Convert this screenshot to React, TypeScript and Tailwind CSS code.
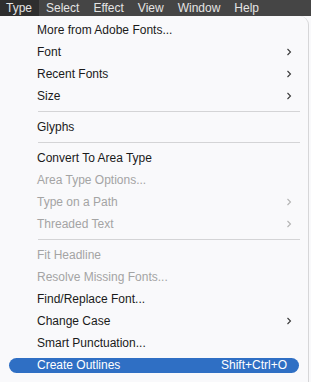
import { ReactNode } from "react";

type Item =
  | { kind: "sep" }
  | {
      kind: "item";
      label: string;
      disabled?: boolean;
      submenu?: boolean;
      shortcut?: string;
      active?: boolean;
    };

const menuBar = ["Type", "Select", "Effect", "View", "Window", "Help"];

const items: Item[] = [
  { kind: "item", label: "More from Adobe Fonts..." },
  { kind: "item", label: "Font", submenu: true },
  { kind: "item", label: "Recent Fonts", submenu: true },
  { kind: "item", label: "Size", submenu: true },
  { kind: "sep" },
  { kind: "item", label: "Glyphs" },
  { kind: "sep" },
  { kind: "item", label: "Convert To Area Type" },
  { kind: "item", label: "Area Type Options...", disabled: true },
  { kind: "item", label: "Type on a Path", disabled: true, submenu: true },
  { kind: "item", label: "Threaded Text", disabled: true, submenu: true },
  { kind: "sep" },
  { kind: "item", label: "Fit Headline", disabled: true },
  { kind: "item", label: "Resolve Missing Fonts...", disabled: true },
  { kind: "item", label: "Find/Replace Font..." },
  { kind: "item", label: "Change Case", submenu: true },
  { kind: "item", label: "Smart Punctuation..." },
  { kind: "item", label: "Create Outlines", shortcut: "Shift+Ctrl+O", active: true },
];

function Chevron({ disabled }: { disabled?: boolean }) {
  return (
    <svg width="6" height="8" viewBox="0 0 6 8" className={disabled ? "text-[#b4b4b4]" : "text-[#3a3a3a]"}>
      <path d="M1.5 1 L4.5 4 L1.5 7" fill="none" stroke="currentColor" strokeWidth="1.1" />
    </svg>
  );
}

function Row({ children, active }: { children: ReactNode; active?: boolean }) {
  return (
    <div className="flex h-[22px] items-center px-[9px]">
      <div
        className={
          active
            ? "flex h-[15px] w-full items-center rounded-full bg-[#2f6fc4] pl-[28px] pr-[12px] text-white"
            : "flex h-[15px] w-full items-center pl-[28px] pr-[7px]"
        }
      >
        {children}
      </div>
    </div>
  );
}

export default function App() {
  return (
    <div className="h-[382px] w-[311px] overflow-hidden bg-[#f9f9fb] font-['Liberation_Sans',Arial,sans-serif]">
      <div className="flex h-[16px] items-center bg-[#454545] text-[12px] leading-none text-[#e4e4e4]">
        {menuBar.map((m, i) => (
          <div
            key={m}
            className={
              i === 0
                ? "flex h-full items-center bg-[#2e2e2e] pl-[6px] pr-[7px]"
                : "flex h-full items-center px-[7px]"
            }
          >
            {m}
          </div>
        ))}
      </div>
      <div className="relative mr-[2px] h-[366px] rounded-tr-[9px] border-r border-[#d6d6d8] bg-[#f9f9fb] pt-[3px] text-[12px] text-[#1a1a1a]">
        {items.map((it, i) =>
          it.kind === "sep" ? (
            <div key={i} className="flex h-[9px] items-center pl-[38px] pr-[8px]">
              <div className="h-px w-full bg-[#d4d4d6]" />
            </div>
          ) : (
            <Row key={i} active={it.active}>
              <span className={it.disabled ? "flex-1 text-[#a4a4a4]" : "flex-1"}>{it.label}</span>
              {it.shortcut && <span>{it.shortcut}</span>}
              {it.submenu && <Chevron disabled={it.disabled} />}
            </Row>
          )
        )}
      </div>
    </div>
  );
}
